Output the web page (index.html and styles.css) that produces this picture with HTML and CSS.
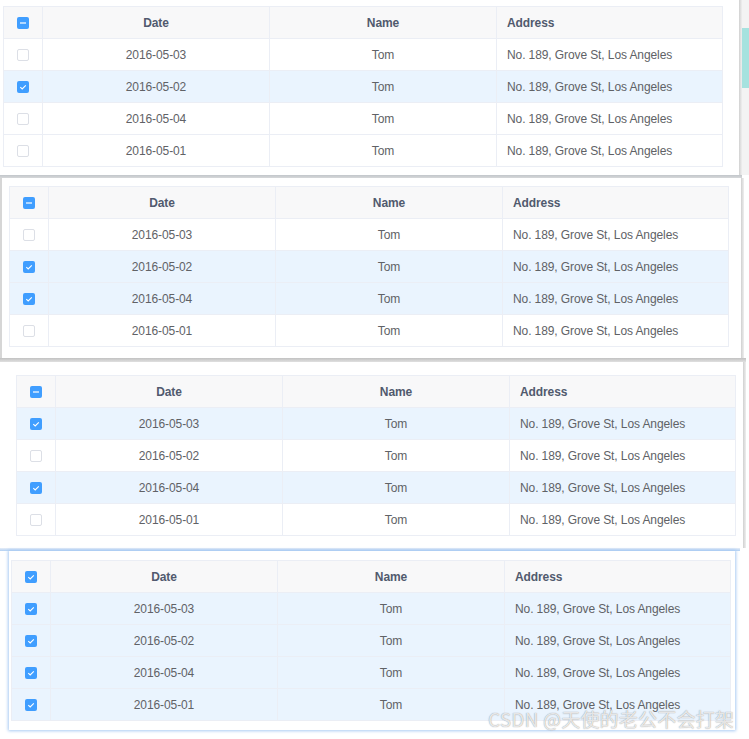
FILE: index.html
```html
<!DOCTYPE html>
<html lang="en">
<head>
<meta charset="utf-8">
<title>Table selection</title>
<link rel="stylesheet" href="styles.css">
</head>
<body>
<div class="shot shot-1">
  <div class="panel panel-1">
    <div class="tbl">
      <div class="row head">
        <div class="cell chk"><span class="cb on"><svg viewBox="0 0 12 12"><rect width="12" height="12" rx="2" fill="#409eff"/><path d="M3 6h6" stroke="#fff" stroke-width="1.2"/></svg></span></div>
        <div class="cell c">Date</div><div class="cell c">Name</div><div class="cell l">Address</div>
      </div>
      <div class="row"><div class="cell chk"><span class="cb"></span></div><div class="cell c">2016-05-03</div><div class="cell c">Tom</div><div class="cell l">No. 189, Grove St, Los Angeles</div></div>
      <div class="row sel"><div class="cell chk"><span class="cb on"><svg viewBox="0 0 12 12"><rect width="12" height="12" rx="2" fill="#409eff"/><path d="M3.3 6.2l1.9 1.8 3.6-3.7" fill="none" stroke="#fff" stroke-width="1.1"/></svg></span></div><div class="cell c">2016-05-02</div><div class="cell c">Tom</div><div class="cell l">No. 189, Grove St, Los Angeles</div></div>
      <div class="row"><div class="cell chk"><span class="cb"></span></div><div class="cell c">2016-05-04</div><div class="cell c">Tom</div><div class="cell l">No. 189, Grove St, Los Angeles</div></div>
      <div class="row"><div class="cell chk"><span class="cb"></span></div><div class="cell c">2016-05-01</div><div class="cell c">Tom</div><div class="cell l">No. 189, Grove St, Los Angeles</div></div>
    </div>
  </div>
  <div class="edge"></div>
  <div class="aside"><div class="teal"></div></div>
</div>
<div class="seam seam-1"></div>
<div class="shot shot-2">
  <div class="strip"></div>
  <div class="panel panel-2">
    <div class="tbl">
      <div class="row head">
        <div class="cell chk"><span class="cb on"><svg viewBox="0 0 12 12"><rect width="12" height="12" rx="2" fill="#409eff"/><path d="M3 6h6" stroke="#fff" stroke-width="1.2"/></svg></span></div>
        <div class="cell c">Date</div><div class="cell c">Name</div><div class="cell l">Address</div>
      </div>
      <div class="row"><div class="cell chk"><span class="cb"></span></div><div class="cell c">2016-05-03</div><div class="cell c">Tom</div><div class="cell l">No. 189, Grove St, Los Angeles</div></div>
      <div class="row sel"><div class="cell chk"><span class="cb on"><svg viewBox="0 0 12 12"><rect width="12" height="12" rx="2" fill="#409eff"/><path d="M3.3 6.2l1.9 1.8 3.6-3.7" fill="none" stroke="#fff" stroke-width="1.1"/></svg></span></div><div class="cell c">2016-05-02</div><div class="cell c">Tom</div><div class="cell l">No. 189, Grove St, Los Angeles</div></div>
      <div class="row sel"><div class="cell chk"><span class="cb on"><svg viewBox="0 0 12 12"><rect width="12" height="12" rx="2" fill="#409eff"/><path d="M3.3 6.2l1.9 1.8 3.6-3.7" fill="none" stroke="#fff" stroke-width="1.1"/></svg></span></div><div class="cell c">2016-05-04</div><div class="cell c">Tom</div><div class="cell l">No. 189, Grove St, Los Angeles</div></div>
      <div class="row"><div class="cell chk"><span class="cb"></span></div><div class="cell c">2016-05-01</div><div class="cell c">Tom</div><div class="cell l">No. 189, Grove St, Los Angeles</div></div>
    </div>
  </div>
  <div class="edge"></div>
</div>
<div class="seam seam-2"></div>
<div class="shot shot-3">
  <div class="panel panel-3">
    <div class="tbl">
      <div class="row head">
        <div class="cell chk"><span class="cb on"><svg viewBox="0 0 12 12"><rect width="12" height="12" rx="2" fill="#409eff"/><path d="M3 6h6" stroke="#fff" stroke-width="1.2"/></svg></span></div>
        <div class="cell c">Date</div><div class="cell c">Name</div><div class="cell l">Address</div>
      </div>
      <div class="row sel"><div class="cell chk"><span class="cb on"><svg viewBox="0 0 12 12"><rect width="12" height="12" rx="2" fill="#409eff"/><path d="M3.3 6.2l1.9 1.8 3.6-3.7" fill="none" stroke="#fff" stroke-width="1.1"/></svg></span></div><div class="cell c">2016-05-03</div><div class="cell c">Tom</div><div class="cell l">No. 189, Grove St, Los Angeles</div></div>
      <div class="row"><div class="cell chk"><span class="cb"></span></div><div class="cell c">2016-05-02</div><div class="cell c">Tom</div><div class="cell l">No. 189, Grove St, Los Angeles</div></div>
      <div class="row sel"><div class="cell chk"><span class="cb on"><svg viewBox="0 0 12 12"><rect width="12" height="12" rx="2" fill="#409eff"/><path d="M3.3 6.2l1.9 1.8 3.6-3.7" fill="none" stroke="#fff" stroke-width="1.1"/></svg></span></div><div class="cell c">2016-05-04</div><div class="cell c">Tom</div><div class="cell l">No. 189, Grove St, Los Angeles</div></div>
      <div class="row"><div class="cell chk"><span class="cb"></span></div><div class="cell c">2016-05-01</div><div class="cell c">Tom</div><div class="cell l">No. 189, Grove St, Los Angeles</div></div>
    </div>
  </div>
  <div class="edge"></div>
</div>
<div class="seam seam-3"></div>
<div class="shot shot-4">
  <div class="panel panel-4">
    <div class="tbl">
      <div class="row head">
        <div class="cell chk"><span class="cb on"><svg viewBox="0 0 12 12"><rect width="12" height="12" rx="2" fill="#409eff"/><path d="M3.3 6.2l1.9 1.8 3.6-3.7" fill="none" stroke="#fff" stroke-width="1.1"/></svg></span></div>
        <div class="cell c">Date</div><div class="cell c">Name</div><div class="cell l">Address</div>
      </div>
      <div class="row sel"><div class="cell chk"><span class="cb on"><svg viewBox="0 0 12 12"><rect width="12" height="12" rx="2" fill="#409eff"/><path d="M3.3 6.2l1.9 1.8 3.6-3.7" fill="none" stroke="#fff" stroke-width="1.1"/></svg></span></div><div class="cell c">2016-05-03</div><div class="cell c">Tom</div><div class="cell l">No. 189, Grove St, Los Angeles</div></div>
      <div class="row sel"><div class="cell chk"><span class="cb on"><svg viewBox="0 0 12 12"><rect width="12" height="12" rx="2" fill="#409eff"/><path d="M3.3 6.2l1.9 1.8 3.6-3.7" fill="none" stroke="#fff" stroke-width="1.1"/></svg></span></div><div class="cell c">2016-05-02</div><div class="cell c">Tom</div><div class="cell l">No. 189, Grove St, Los Angeles</div></div>
      <div class="row sel"><div class="cell chk"><span class="cb on"><svg viewBox="0 0 12 12"><rect width="12" height="12" rx="2" fill="#409eff"/><path d="M3.3 6.2l1.9 1.8 3.6-3.7" fill="none" stroke="#fff" stroke-width="1.1"/></svg></span></div><div class="cell c">2016-05-04</div><div class="cell c">Tom</div><div class="cell l">No. 189, Grove St, Los Angeles</div></div>
      <div class="row sel"><div class="cell chk"><span class="cb on"><svg viewBox="0 0 12 12"><rect width="12" height="12" rx="2" fill="#409eff"/><path d="M3.3 6.2l1.9 1.8 3.6-3.7" fill="none" stroke="#fff" stroke-width="1.1"/></svg></span></div><div class="cell c">2016-05-01</div><div class="cell c">Tom</div><div class="cell l">No. 189, Grove St, Los Angeles</div></div>
    </div>
  </div>
</div>
<div class="watermark">CSDN @天使的老公不会打架</div>
</body>
</html>
```

FILE: styles.css
```css
* { box-sizing: border-box; }
html, body { margin: 0; padding: 0; }
body {
  width: 749px;
  height: 739px;
  overflow: hidden;
  position: relative;
  background: #fff;
  font-family: "Liberation Sans", Arial, "Noto Sans CJK SC", sans-serif;
  font-size: 12px;
  color: #606266;
  display: flex;
  flex-direction: column;
}
.shot { display: flex; flex: none; }
.shot-1 { height: 175px; }
.shot-2 { height: 180px; }
.shot-3 { height: 186px; }
.shot-4 { height: 179px; padding-left: 9px; }

.panel { background: #fff; flex: none; }
.panel-1 { width: 739px; padding: 6px 0 0 3px; }
.panel-2 { width: 739px; padding: 8px 0 0 7px; }
.panel-3 { width: 743px; padding: 13px 0 0 16px; }
.panel-4 {
  width: 726px;
  padding: 9px 0 0 2px;
  box-shadow: 0 0 3px 1px #a9cbf3;
}

.edge { width: 3px; flex: none; background: linear-gradient(90deg, #d0d0d0, #efefef); }
.aside { flex: 1; background: #f3f3f3; padding-top: 28px; }
.teal { height: 60px; background: #a6e2df; }
.strip { width: 2px; flex: none; background: #d6d6d6; }

.seam { flex: none; }
.seam-1 { height: 3px; width: 742px; background: linear-gradient(#c2c6ca, #d6d8da); }
.seam-2 { height: 4px; width: 746px; background: linear-gradient(#c2c2c2, #e0e0e0); }
.seam-3 { height: 3px; width: 740px; background: linear-gradient(#e8eef7, #b0cff3); }

.tbl {
  width: 720px;
  border: 1px solid #ebeef5;
  border-bottom: 0;
}
.row {
  display: grid;
  grid-template-columns: 39px 227px 227px 1fr;
  height: 32px;
  border-bottom: 1px solid #ebeef5;
}
.row.head { background: #f8f8f9; font-weight: bold; color: #515a6e; }
.row.sel { background: #eaf4fe; }
.cell {
  display: flex;
  align-items: center;
  border-right: 1px solid #ebeef5;
  white-space: nowrap;
  overflow: hidden;
  letter-spacing: -0.1px;
}
.cell:last-child { border-right: 0; }
.cell.c { justify-content: center; }
.cell.l { padding-left: 10px; }
.cell.chk { justify-content: center; }

.cb {
  width: 12px;
  height: 12px;
  border: 1px solid #dcdfe6;
  border-radius: 2px;
  background: #fff;
  display: block;
}
.cb.on { border: 0; background: none; }
.cb svg { display: block; width: 12px; height: 12px; }

.watermark {
  position: absolute;
  right: 15px;
  top: 706px;
  font-family: "Noto Sans CJK SC", "Liberation Sans", sans-serif;
  font-size: 19px;
  line-height: 26px;
  color: rgba(255, 255, 255, 0.8);
  text-shadow: 0 0 1px rgba(90, 90, 90, 0.75);
  letter-spacing: 0.2px;
}
```
